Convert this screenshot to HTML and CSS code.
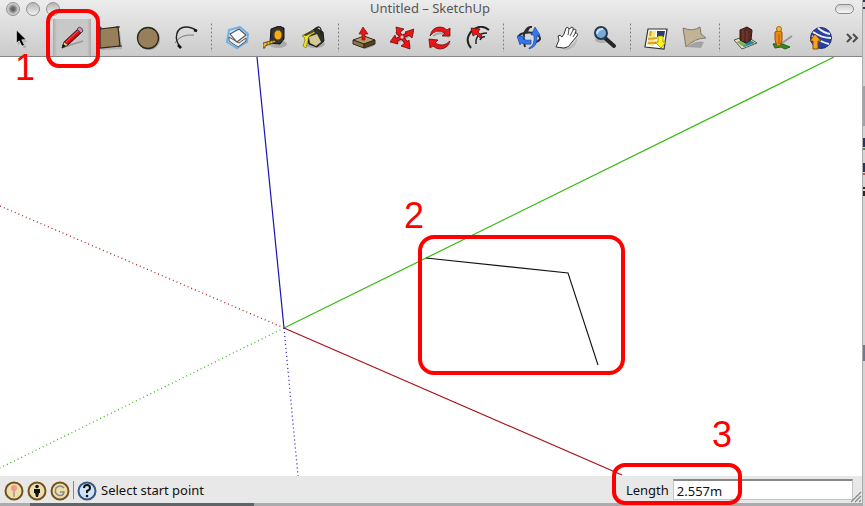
FILE: index.html
```html
<!DOCTYPE html>
<html lang="en">
<head>
<meta charset="utf-8">
<title>Untitled – SketchUp</title>
<link rel="stylesheet" href="styles.css">
</head>
<body>
<main class="window">
  <header class="chrome">
    <div class="titlebar">
      <div class="lights">
        <button class="light light-dirty" aria-label="Close"></button>
        <button class="light" aria-label="Minimize"></button>
        <button class="light" aria-label="Zoom"></button>
      </div>
      <h1 class="title">Untitled – SketchUp</h1>
      <button class="pill" aria-label="Toggle toolbar"></button>
    </div>
    <nav class="toolbar" aria-label="Tools">
      <button class="tool select" aria-label="Select"><svg viewBox="0 0 24 24"><path d="M10 6v14l3-3 3 6 3-1-3-6h4z" fill="#666" opacity=".4"/><path d="M8 3v15l3-3 3 6 3-1-3-6h5z" fill="#000" stroke="#fff" stroke-width=".8"/></svg></button>
      <button class="tool active" aria-label="Line"><svg viewBox="0 0 24 24"><path d="M4 21L23 15" stroke="#999" stroke-width="1.5"/><path d="M2 22l2-6L19 2l4 3L8 19z" fill="#e00f14" stroke="#222"/><path d="M6 16L19 4" stroke="#ff5a5a"/><path d="M8 18L21 6" stroke="#8c0000"/><path d="M17 3l2-2q3 0 4 4l-2 2z" fill="#d58ab8" stroke="#333" stroke-width=".7"/><path d="M2 22l2-6 4 3z" fill="#ead99a" stroke="#333" stroke-width=".6"/><path d="M2 22l1-4 3 2z" fill="#111"/></svg></button>
      <button class="tool" aria-label="Rectangle"><svg viewBox="0 0 24 24"><path d="M3 4l19 1 2 18-21 1z" fill="#777" opacity=".35"/><path d="M2 3l18-2 2 19-20 2z" fill="#978059" stroke="#2a251c" stroke-width="1.2"/><path d="M0 2h4M2 0v4M18 1h4M20 20h4M1 20v4" stroke="#222"/></svg></button>
      <button class="tool" aria-label="Circle"><svg viewBox="0 0 24 24"><circle cx="13" cy="13" r="11" fill="#777" opacity=".5"/><circle cx="12" cy="12" r="10.5" fill="#978059" stroke="#2a251c" stroke-width="1.3"/></svg></button>
      <button class="tool" aria-label="Arc"><svg viewBox="0 0 24 24" fill="none"><path d="M1 17Q6 8 20 9" stroke="#777"/><path d="M7 22C-1 13 2 1 12 1q6 0 11 4" stroke="#222" stroke-width="1.4"/><path d="M4 19l3 3M20 4l3 1" stroke="#111" stroke-width="2.5"/></svg></button>
      <span class="divider"></span>
      <button class="tool" aria-label="Make component"><svg viewBox="0 0 24 24"><path d="M4 4l11-3 8 7-1 8-10 6-10-6z" fill="#d4e4f0" stroke="#6eb1e6" stroke-width="2"/><path d="M4 11l10 6 7-5v3l-8 6-9-6z" fill="#eee" stroke="#555"/><path d="M5 8l9-5 7 6-9 7z" fill="#fafafa" stroke="#555" stroke-width="1.1"/></svg></button>
      <button class="tool" aria-label="Tape measure"><svg viewBox="0 0 24 24"><ellipse cx="15" cy="18" rx="9" ry="4" fill="#777" opacity=".45"/><path d="M8 3l8-3 5 2v11l-4 5-10-1z" fill="#333" stroke="#111"/><ellipse cx="15" cy="9" rx="4" ry="5" fill="#f2ae18" stroke="#6c4910"/><path d="M0 17l11-3 2 2-11 4v2H0z" fill="#f6bb10" stroke="#453417" stroke-width=".8"/><path d="M4 16v3M7 15v3M10 14v3" stroke="#333" stroke-width=".7"/></svg></button>
      <button class="tool" aria-label="Paint bucket"><svg viewBox="0 0 24 24"><ellipse cx="14" cy="18" rx="10" ry="4" fill="#777" opacity=".45"/><path d="M6 8l9-6 7 4 1 9-7 6-8-3z" fill="#302f29" stroke="#171713"/><path d="M8 11l8-3 4 8-5 4-6-3z" fill="#d4c798"/><path d="M12 8q2-7 6-7 3 1 2 8" fill="none" stroke="#222" stroke-width="1.3"/><path d="M1 10l11-6 2 3q-7 2-7 7l-2 8-3-2 2-6-1-3z" fill="#f0e61c" stroke="#615e24" stroke-width=".6"/><path d="M2 9l10-5 1 2-8 4z" fill="#4a452c"/></svg></button>
      <span class="divider"></span>
      <button class="tool" aria-label="Push/Pull"><svg viewBox="0 0 24 24"><path d="M3 18l20-3-1 5-9 3z" fill="#777" opacity=".5"/><path d="M1 14l11-4 11 4-11 4z" fill="#b69b6b" stroke="#332b1d"/><path d="M1 14v4l11 4v-4z" fill="#8d7548" stroke="#332b1d"/><path d="M12 18l11-4v4l-11 4z" fill="#544226" stroke="#332b1d"/><path d="M10 14V8H7l4-7 5 7h-3v6z" fill="#ed1515" stroke="#711" stroke-width=".7"/></svg></button>
      <button class="tool" aria-label="Move"><svg viewBox="0 0 24 24"><path d="M7 5l13 16M22 8L5 17" stroke="#777" stroke-width="3" opacity=".5"/><path d="M7 5l11 14M20 7L4 15" stroke="#611" stroke-width="4"/><g fill="#ed1515" stroke="#611" stroke-width=".8"><path d="M6 1l8 2-7 6zM24 3l-2 9-7-6zM0 16l5-7 3 9zM20 23l-9-3 8-6z"/></g><path d="M7 5l11 14M20 7L4 15" stroke="#ed1515" stroke-width="2.500"/><circle cx="12" cy="11" r="1.500" fill="#ddd"/></svg></button>
      <button class="tool" aria-label="Rotate"><svg viewBox="0 0 24 24"><path d="M5 10Q12 4 21 11M22 17Q15 26 6 19" fill="none" stroke="#777" stroke-width="2" opacity=".5"/><g fill="#ed1515" stroke="#611" stroke-width=".8"><path d="M2 10Q4 1 12 1q4 0 7 3l3-2v8h-8l3-3q-9-5-15 3z"/><path d="M22 15q-3 8-10 8-4 0-7-3l-3 2-1-9 9 1-3 3q8 5 15-2z"/></g></svg></button>
      <button class="tool" aria-label="Offset"><svg viewBox="0 0 24 24" fill="none"><path d="M5 22C-2 14 3 4 13 1q5-1 10 3" stroke="#222" stroke-width="2"/><path d="M10 18Q9 7 21 7M14 14q2-4 5-3" stroke="#222" stroke-width="1.500"/><path d="M14 12l-4-4-3 2-2-8 9 1-2 3 4 4z" fill="#ed1515" stroke="#611" stroke-width=".8"/></svg></button>
      <span class="divider"></span>
      <button class="tool" aria-label="Orbit"><svg viewBox="0 0 24 24"><g fill="none" stroke="#2c2c2c" stroke-width="2"><path d="M8 21Q4 6 12 1M15 1q-4-1-5 6"/><path d="M3 14Q-1 9 7 7q9-2 15 3 3 4-3 6"/></g><path d="M12 22q6-2 5-13h-3l4-8 5 8-3 1q1 11-8 13z" fill="#3377f0" stroke="#173b86" stroke-width=".6"/><path d="M0 10l8 0-2 3q4 2 8 1v4q-5 1-10-1l-1 2z" fill="#3377f0" stroke="#173b86" stroke-width=".6"/></svg></button>
      <button class="tool" aria-label="Pan"><svg viewBox="0 0 24 24"><path d="M4 22h7q8-2 11-10v3q-3 8-11 9z" fill="#888" opacity=".35"/><path d="M1 21l3-7-1-4q2-2 4 1l2-3 2-6q2-2 3 1l3-2q2 0 1 3 3-2 3 1l-1 2q4 0 2 3l-5 6q-3 6-8 6z" fill="#fff" stroke="#333"/><path d="M13 9l1-6M15 10l3-6M18 11l3-5" stroke="#333" stroke-width=".9"/></svg></button>
      <button class="tool" aria-label="Zoom"><svg viewBox="0 0 24 24"><ellipse cx="9" cy="14" rx="7" ry="3" fill="#777" opacity=".4"/><path d="M12 12l9 8" stroke="#252525" stroke-width="4" stroke-linecap="round"/><circle cx="8" cy="7" r="6" fill="#77a9da" stroke="#273b4e" stroke-width="2"/><path d="M4 8q0-5 6-5" stroke="#d0e4f6" stroke-width="2" fill="none"/></svg></button>
      <span class="divider"></span>
      <button class="tool" aria-label="Get current view"><svg viewBox="0 0 24 24"><path d="M4 3h19l-3 20-19-2z" fill="#fff" stroke="#333" stroke-width="1.2"/><path d="M5 5h7l-2 15-7-1z" fill="#f3e68c"/><path d="M13 5h8l-1 6h-7z" fill="#253e69"/><path d="M7 5l-1 5M4 13l9-1M4 17l8 0" stroke="#e0a22a" stroke-width="2" fill="none"/><path d="M14 10h5v6h3l-5 6-6-6h3z" fill="#fff51c" stroke="#8a801a" stroke-width=".8"/></svg></button>
      <button class="tool" aria-label="Toggle terrain"><svg viewBox="0 0 24 24"><path d="M5 21q9-7 17-5l-3 6z" fill="#888" opacity=".65"/><path d="M1 2q10 4 17-1l1 7 5 4q-11 0-20 9z" fill="#c3b396" stroke="#81786a"/></svg></button>
      <span class="divider"></span>
      <button class="tool" aria-label="Get models"><svg viewBox="0 0 24 24"><path d="M1 14l12-4 11 7-15 6z" fill="#e9e1bc" stroke="#555"/><path d="M4 16l7 5 11-4-7-4z" fill="#2189a8"/><path d="M4 16l5 4 5-1-6-5z" fill="#79b85a"/><path d="M7 4l7-3 5 3-1 10-5 3-6-3z" fill="#582821" stroke="#351610"/><path d="M14 5v11M10 3v12" stroke="#834237"/></svg></button>
      <button class="tool" aria-label="Street view"><svg viewBox="0 0 24 24"><path d="M11 17l10-7" stroke="#999" stroke-width="2"/><path d="M2 18l7-1 10 4-5 2-4-2-6 1z" fill="#2e8d20" stroke="#226318"/><path d="M4 6q4-3 7 0v8l-2 6H6L4 14z" fill="#e98a12" stroke="#965111"/><circle cx="8" cy="3" r="2.500" fill="#f6bc32" stroke="#9b681b"/><path d="M8 8v10" stroke="#b25313"/></svg></button>
      <button class="tool" aria-label="Share model"><svg viewBox="0 0 24 24"><circle cx="12" cy="12" r="10.500" fill="#2840a0" stroke="#273563"/><path d="M4 6q9 6 18 6M3 10q9 6 17 8M9 2q6 5 12 6" fill="none" stroke="#e6edfc" stroke-width="2"/><path d="M4 23v-8H1l5-7 6 7H9v8z" fill="#ffa01b" stroke="#75430d" stroke-width=".9"/></svg></button>
      <button class="tool more" aria-label="More tools"><svg viewBox="0 0 24 24" fill="none" stroke="#4a4a4a" stroke-width="2"><path d="M7 8l4 4-4 4M13 8l4 4-4 4"/></svg></button>
    </nav>
  </header>

  <section class="viewport" aria-label="Model">
    <svg class="scene" viewBox="0 0 862 419" preserveAspectRatio="xMidYMid slice" fill="none">
      <path d="M257 0L284 271" stroke="#1c10b8" stroke-width="1.2"/>
      <path d="M284 271L834 0" stroke="#39b912" stroke-width="1.2"/>
      <path d="M284 271L622 418" stroke="#a8101a" stroke-width="1.2"/>
      <g stroke-dasharray="1 3">
        <path d="M284 271L0 149" stroke="#b02020" stroke-width="1.3"/>
        <path d="M284 271L0 411" stroke="#36b91a" stroke-width="1.3"/>
        <path d="M284 271L298 419" stroke="#2a1cc0" stroke-width="1.3"/>
      </g>
      <path d="M426 201L568 216L598 308" stroke="#111" stroke-width="1.1"/>
    </svg>
  </section>

  <footer class="status">
    <button class="badge" aria-label="Geo-location"><svg viewBox="0 0 20 20"><circle cx="10" cy="10" r="8.5" fill="#eadfac" stroke="#76501a" stroke-width="2"/><path d="M10 10v6" stroke="#777"/><circle cx="10" cy="7" r="3" fill="#ee9b8c"/><path d="M8 9l2 3 2-3" fill="#ee9b8c"/></svg></button>
    <button class="badge" aria-label="Credits"><svg viewBox="0 0 20 20"><circle cx="10" cy="10" r="8.5" fill="#eadfac" stroke="#76501a" stroke-width="2"/><circle cx="10" cy="5.500" r="1.800" fill="#111"/><path d="M7 8h6v4h-1l-1 4H9l-1-4H7z" fill="#111"/></svg></button>
    <button class="badge" aria-label="Sign in"><svg viewBox="0 0 20 20"><circle cx="10" cy="10" r="8.500" fill="#eadfac" stroke="#76501a" stroke-width="2"/><path d="M14 7q-4-4-8 0-2 5 2 7 5 2 6-3h-4" fill="none" stroke="#888" stroke-width="1.500"/></svg></button>
    <span class="rule"></span>
    <button class="badge help" aria-label="Help"><svg viewBox="0 0 20 20"><circle cx="10" cy="10" r="8.500" fill="#cfe2f5" stroke="#345680" stroke-width="2"/><path d="M7 7q0-3 3-3t3 3q0 2-3 3v2" fill="none" stroke="#111" stroke-width="2"/><circle cx="10" cy="15" r="1.300" fill="#111"/></svg></button>
    <p class="hint">Select start point</p>
    <label class="length-label" for="length">Length</label>
    <input class="length" id="length" type="text" value="2.557m">
    <svg class="grip" viewBox="0 0 12 12" stroke="#888" stroke-width="1.200"><path d="M1 11L11 1M5 11l6-6M9 11l2-2"/></svg>
  </footer>
</main>

<svg class="backdrop" viewBox="0 0 3 506" preserveAspectRatio="none" aria-hidden="true">
  <path d="M1 0h2v506H1z" fill="#d4d4d4"/>
  <path d="M1 86h2v40H1z" fill="#a2a2a6"/>
  <path d="M1 0h2v2H1zM1 7h2v2H1zM1 138h2v9H1zM1 163h2v9H1z" fill="#28355f"/>
  <path d="M1 148h2v2H1z" fill="#438a3c"/>
  <path d="M1 173h2v2H1z" fill="#d84b4b"/>
  <path d="M1 187h2v2H1zM1 191h2v5H1z" fill="#33251c"/>
  <path d="M1 345h2v16H1z" fill="#737890"/>
</svg>
<div class="mark mark-tool"></div>
<div class="mark mark-lines"></div>
<div class="mark mark-length"></div>
<span class="step step-1">1</span>
<span class="step step-2">2</span>
<span class="step step-3">3</span>
</body>
</html>
```
FILE: styles.css
```css
* { box-sizing: border-box; }

body {
  margin: 0;
  height: 100vh;
  padding: 0 3px 3px 0;
  position: relative;
  overflow: hidden;
  background: linear-gradient(90deg, #a9abae 30px, #5d6568 30px, #5d6568 254px, #a9abae 254px);
  font-family: "Noto Sans", "Open Sans", sans-serif;
  font-size: 13px;
  color: #111;
}

button {
  margin: 0;
  padding: 0;
  border: 0;
  background: none;
  flex: none;
}

svg { display: block; }

.window {
  height: 100%;
  display: flex;
  flex-direction: column;
  background: #fff;
}

.chrome {
  background: linear-gradient(#ececec, #cbcbcb);
  border-bottom: 1px solid #868686;
}

.titlebar {
  height: 19px;
  display: grid;
  grid-template-columns: 1fr auto 1fr;
  align-items: center;
  padding: 0 8px 2px 6px;
}

.lights {
  display: flex;
  gap: 6px;
}

.light {
  width: 14px;
  height: 14px;
  border: 1px solid #929292;
  border-radius: 50%;
  background: linear-gradient(#b5b5b5, #f2f2f2);
}

.light-dirty { background: radial-gradient(#666 20%, #ccc 60%); }

.title {
  margin: 0;
  font-size: 13px;
  line-height: 17px;
  font-weight: 400;
  color: #555;
}

.pill {
  justify-self: end;
  width: 19px;
  height: 10px;
  border: 1px solid #8c8c8c;
  border-radius: 5px;
  background: linear-gradient(#cfcfcf, #f6f6f6);
}

.toolbar {
  height: 37px;
  display: flex;
}

.tool {
  width: 38px;
  display: grid;
  place-items: center;
}

.tool svg {
  width: 24px;
  height: 24px;
}

.select { margin: 0 14px 0 1px; }

.select svg {
  width: 22px;
  height: 22px;
}

.active {
  background: linear-gradient(90deg, #aaa, #c8c8c8 10%, #c8c8c8 90%, #aaa);
}

.divider {
  width: 13px;
  flex: none;
  margin: 4px 0;
  background: linear-gradient(#808080 50%, transparent 50%) center / 1px 4px repeat-y;
}

.more {
  width: 24px;
  margin-left: auto;
}

.viewport {
  flex: 1;
  min-height: 0;
}

.scene {
  width: 100%;
  height: 100%;
}

.status {
  height: 27px;
  flex: none;
  display: flex;
  align-items: center;
  padding: 0 0 0 4px;
  gap: 3px;
  background: #e8e8e8;
}

.badge,
.badge svg {
  width: 20px;
  height: 20px;
}

.badge { margin-top: 3px; }

.rule {
  width: 1px;
  height: 18px;
  background: #888;
}

.hint {
  margin: 0;
  padding: 1px 0 0 1px;
  flex: 1;
}

.length-label { padding: 1px 1px 0 0; }

.length {
  width: 21%;
  height: 21px;
  padding: 1px 3px 0;
  border: 1px solid #c4c4c4;
  border-top: 2px solid #888;
  background: #fff;
  font: inherit;
  color: inherit;
}

.grip {
  width: 12px;
  height: 12px;
  margin-left: -6px;
  align-self: flex-end;
}

/* Sliver of the desktop behind the window */
.backdrop {
  position: absolute;
  top: 0;
  right: 0;
  width: 3px;
  height: 100%;
}

/* Tutorial callouts laid over the window */
.mark {
  position: absolute;
  border: 4px solid #fe0000;
  border-radius: 13px;
  pointer-events: none;
}

.mark-tool { left: 46px; top: 9px; width: 54px; height: 59px; }
.mark-lines { left: 418px; top: 235px; width: 207px; height: 140px; border-radius: 16px; }
.mark-length { left: 612px; top: 463px; width: 130px; height: 42px; }

.step {
  position: absolute;
  font-family: "Liberation Sans", Arial, sans-serif;
  font-size: 36px;
  line-height: 36px;
  color: #fe0000;
}

.step-1 { left: 15px; top: 50px; }
.step-2 { left: 404px; top: 198px; }
.step-3 { left: 712px; top: 417px; }
```
